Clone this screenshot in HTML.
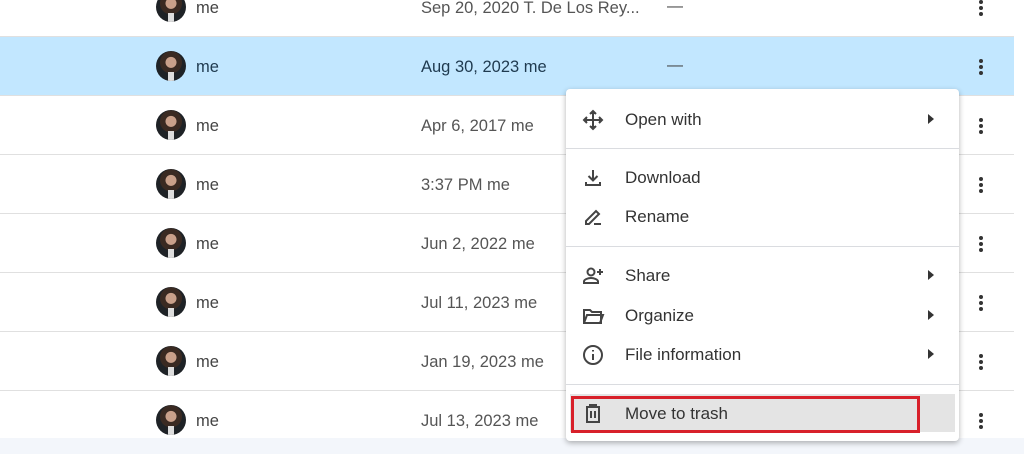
<!DOCTYPE html><html><head><style>
body{margin:0;width:1024px;height:454px;overflow:hidden;background:#fff;font-family:"Liberation Sans",sans-serif;position:relative}
.row{position:absolute;left:0;width:1014px;height:58px;border-bottom:1px solid #e0e0e0}
.av{position:absolute;left:156px;top:14px;width:30px;height:30px;border-radius:50%;background:radial-gradient(circle at 50% 38%,#c9a08a 0 22%,#3a2a22 24% 45%,#1e2226 47%);overflow:hidden}
.av:after{content:"";position:absolute;left:12px;top:21px;width:6px;height:9px;background:#ddd}
.me{position:absolute;left:196px;top:21px;font-size:16.5px;color:#444}
.dt{position:absolute;left:421px;top:21px;font-size:16.5px;color:#555}
.dash{position:absolute;left:667px;top:20px;font-size:16px;color:#444}
.kb{position:absolute;left:979px;top:22px;width:4px}
.kb i{display:block;width:4px;height:4px;border-radius:50%;background:#333;margin-bottom:2px}
.menu{position:absolute;left:566px;top:89px;width:393px;height:352px;background:#fff;border-radius:4px;box-shadow:0 2px 6px rgba(0,0,0,.3)}
.it{position:absolute;left:0;width:393px;height:38px}
.it span{position:absolute;left:59px;top:10px;font-size:17px;color:#333}
.it svg.ic{position:absolute;left:15px;top:8px}
.ar{position:absolute;left:362px;top:14px;width:0;height:0;border-left:6px solid #333;border-top:5px solid transparent;border-bottom:5px solid transparent}
.sep{position:absolute;left:0;width:393px;height:1px;background:#dadce0}
</style></head><body>
<div class="row" style="top:-22px"><div class="av"></div><div class="me">me</div><div class="dt">Sep 20, 2020 T. De Los Rey...</div><div class="dash">—</div><div class="kb"><i></i><i></i><i></i></div></div>
<div class="row" style="top:37px;background:#c2e7ff"><div class="av"></div><div class="me" style="color:#1f3a4f">me</div><div class="dt" style="color:#1f3a4f">Aug 30, 2023 me</div><div class="dash">—</div><div class="kb"><i></i><i></i><i></i></div></div>
<div class="row" style="top:96px"><div class="av"></div><div class="me">me</div><div class="dt">Apr 6, 2017 me</div><div class="kb"><i></i><i></i><i></i></div></div>
<div class="row" style="top:155px"><div class="av"></div><div class="me">me</div><div class="dt">3:37 PM me</div><div class="kb"><i></i><i></i><i></i></div></div>
<div class="row" style="top:214px"><div class="av"></div><div class="me">me</div><div class="dt">Jun 2, 2022 me</div><div class="kb"><i></i><i></i><i></i></div></div>
<div class="row" style="top:273px"><div class="av"></div><div class="me">me</div><div class="dt">Jul 11, 2023 me</div><div class="kb"><i></i><i></i><i></i></div></div>
<div class="row" style="top:332px"><div class="av"></div><div class="me">me</div><div class="dt">Jan 19, 2023 me</div><div class="kb"><i></i><i></i><i></i></div></div>
<div class="row" style="top:391px;height:47px;border:none"><div class="av"></div><div class="me">me</div><div class="dt">Jul 13, 2023 me</div><div class="kb"><i></i><i></i><i></i></div></div>
<div style="position:absolute;left:0;top:438px;width:1024px;height:16px;background:#f3f6fb"></div>
<div class="menu">
<div class="it" style="top:11px"><svg class="ic" width="24" height="24" viewBox="0 0 24 24" fill="none" stroke="#444" stroke-width="2"><path d="M12 3v18M3 12h18"/><path d="M9 6l3-3 3 3M9 18l3 3 3-3M6 9l-3 3 3 3M18 9l3 3-3 3" fill="#444"/></svg><span>Open with</span><div class="ar"></div></div>
<div class="sep" style="top:59px"></div>
<div class="it" style="top:69px"><svg class="ic" width="24" height="24" viewBox="0 0 24 24" fill="none" stroke="#444" stroke-width="2"><path d="M12 4v10M7.5 10l4.5 4.5 4.5-4.5M5 16v3h14v-3"/></svg><span>Download</span></div>
<div class="it" style="top:108px"><svg class="ic" width="24" height="24" viewBox="0 0 24 24" fill="none" stroke="#444" stroke-width="2"><path d="M5 19v-3L15 6l3 3L8 19zM13 19h7"/></svg><span>Rename</span></div>
<div class="sep" style="top:157px"></div>
<div class="it" style="top:167px"><svg class="ic" width="24" height="24" viewBox="0 0 24 24" fill="none" stroke="#444" stroke-width="2"><circle cx="10" cy="8" r="3.5"/><path d="M3 19v-1.5c0-2 4-3.5 7-3.5s7 1.5 7 3.5V19zM19 5v6M16 8h6"/></svg><span>Share</span><div class="ar"></div></div>
<div class="it" style="top:207px"><svg class="ic" width="24" height="24" viewBox="0 0 24 24" fill="none" stroke="#444" stroke-width="2"><path d="M3 6h6l2 2h9v11H3zM3 19l3-8h16l-3 8"/></svg><span>Organize</span><div class="ar"></div></div>
<div class="it" style="top:246px"><svg class="ic" width="24" height="24" viewBox="0 0 24 24" fill="none" stroke="#444" stroke-width="2"><circle cx="12" cy="12" r="9"/><path d="M12 11v6M12 7v1.5"/></svg><span>File information</span><div class="ar"></div></div>
<div class="sep" style="top:295px"></div>
<div style="position:absolute;left:4px;top:305px;width:385px;height:38px;background:#e4e4e4"></div>
<div style="position:absolute;left:5px;top:307px;width:343px;height:31px;border:3px solid #d8202a"></div>
<div class="it" style="top:305px"><svg class="ic" width="24" height="24" viewBox="0 0 24 24" fill="none" stroke="#444" stroke-width="2"><path d="M5 5h14M9 5V3h6v2M6 5v15h12V5M10 9v7M14 9v7"/></svg><span>Move to trash</span></div>
</div>
</body></html>
